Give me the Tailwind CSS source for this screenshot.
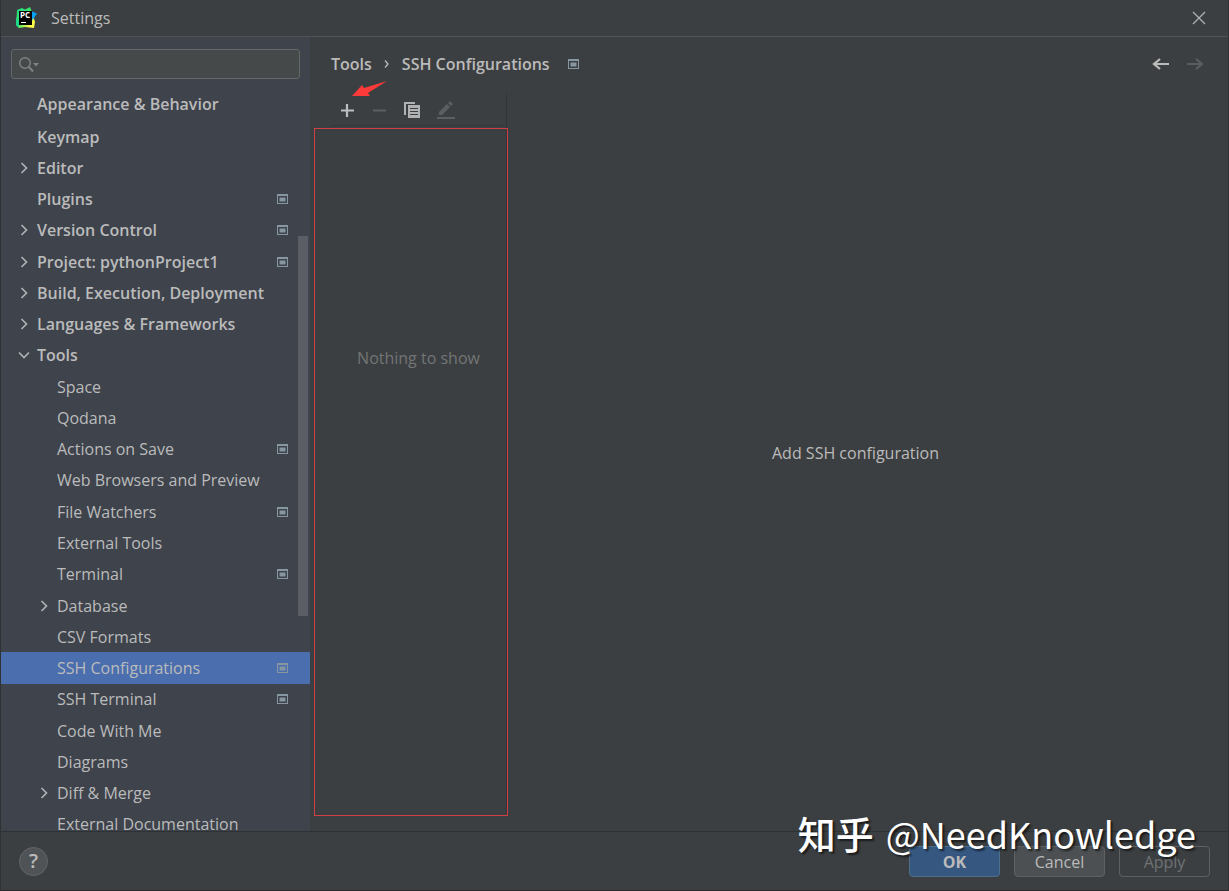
<!DOCTYPE html>
<html lang="en">
<head>
    <meta charset="UTF-8">
    <meta name="viewport" content="width=device-width, initial-scale=1.0">
    <title>Settings</title>
    <script src="https://cdn.jsdelivr.net/npm/@tailwindcss/browser@4"></script>
</head>
<body class="bg-[#3c3f41] font-['Open_Sans','Noto_Sans_CJK_SC',sans-serif] text-base text-[#bbbbbb]">

    <!-- Shared icons -->
    <svg class="hidden">
        <symbol id="chevron" viewBox="0 0 12 12"><path d="M3.5 1L8.5 6L3.5 11" fill="none" stroke="#afb1b3" stroke-width="1.7"/></symbol>
        <symbol id="chevron-down" viewBox="0 0 12 12"><path d="M1 3.5L6 8.5L11 3.5" fill="none" stroke="#afb1b3" stroke-width="1.7"/></symbol>
        <symbol id="project" viewBox="0 0 11 10">
            <path d="M0 0H11V10H0ZM1 2V9H10V2Z" fill="#8797a1" fill-rule="evenodd"/>
            <rect x="2.500" y="3.500" width="6" height="4" fill="#8797a1"/>
        </symbol>
    </svg>

    <div class="relative flex h-screen flex-col overflow-hidden border-x border-[#2f3133]">
        <!-- Title bar -->
        <header class="flex h-[37px] shrink-0 items-center border-b border-[#515456] pr-[22px] pl-[14px]">
            <svg class="h-[22px] w-[22px]" viewBox="0 0 22 22">
                <defs>
                    <linearGradient id="logo" x1="0" y1="0" x2="1" y2="1">
                        <stop offset="0" stop-color="#21d789"/>
                        <stop offset="0.5" stop-color="#3bea62"/>
                        <stop offset="0.8" stop-color="#fcf84a"/>
                    </linearGradient>
                </defs>
                <path d="M2 3L7 1L10 2.500L15 0L17 5L20 15L19 21L10 20L4 21L1 18Z" fill="url(#logo)"/>
                <path d="M16 4L22 6.500L19 11L17 13Z" fill="#07a3f2"/>
                <path d="M1 11L4 13V21L1 18Z" fill="#21d789"/>
                <rect x="4" y="4" width="13" height="14" fill="#000"/>
                <rect x="6" y="15" width="5" height="1" fill="#fff"/>
                <text x="5" y="11" font-size="8" font-weight="700" fill="#fff">PC</text>
            </svg>
            <h1 class="ml-[14px]">Settings</h1>
            <button class="ml-auto" aria-label="Close">
                <svg class="h-[14px] w-[14px]" viewBox="0 0 14 14"><path d="M1 1L13 13M13 1L1 13" stroke="#afb1b3" stroke-width="1.300"/></svg>
            </button>
        </header>

        <main class="flex min-h-0 flex-1">
            <!-- Sidebar -->
            <aside class="relative w-[309px] shrink-0 overflow-hidden bg-[#3e434c] pt-3">
                <div class="relative mx-[10px]">
                    <svg class="absolute top-2 left-2 h-4 w-[22px]" viewBox="0 0 22 16">
                        <circle cx="6" cy="6" r="5.300" fill="none" stroke="#7f8385" stroke-width="1.400"/>
                        <path d="M10 10L14 14.500" stroke="#7f8385" stroke-width="2"/>
                        <path d="M14 6H20L17 9.500Z" fill="#7f8385"/>
                    </svg>
                    <input type="text" aria-label="Search settings" class="block h-[30px] w-full rounded-[3px] border border-[#646869] bg-[#45494a] pr-2 pl-8 outline-none">
                </div>
                <nav class="mt-2" aria-label="Settings categories">
                    <a href="#" class="flex h-[34px] items-center pl-9 font-semibold">Appearance &amp; Behavior</a>
                    <div class="grid h-[719px] auto-rows-fr">
                        <a href="#" class="flex items-center pr-[22px] pl-9 font-semibold">Keymap</a>
                        <a href="#" class="flex items-center pr-[22px] pl-[17px] font-semibold"><svg class="mr-[7px] h-3 w-3"><use href="#chevron"/></svg>Editor</a>
                        <a href="#" class="flex items-center pr-[22px] pl-9 font-semibold">Plugins<svg class="ml-auto h-[10px] w-[11px]"><use href="#project"/></svg></a>
                        <a href="#" class="flex items-center pr-[22px] pl-[17px] font-semibold"><svg class="mr-[7px] h-3 w-3"><use href="#chevron"/></svg>Version Control<svg class="ml-auto h-[10px] w-[11px]"><use href="#project"/></svg></a>
                        <a href="#" class="flex items-center pr-[22px] pl-[17px] font-semibold"><svg class="mr-[7px] h-3 w-3"><use href="#chevron"/></svg>Project: pythonProject1<svg class="ml-auto h-[10px] w-[11px]"><use href="#project"/></svg></a>
                        <a href="#" class="flex items-center pr-[22px] pl-[17px] font-semibold"><svg class="mr-[7px] h-3 w-3"><use href="#chevron"/></svg>Build, Execution, Deployment</a>
                        <a href="#" class="flex items-center pr-[22px] pl-[17px] font-semibold"><svg class="mr-[7px] h-3 w-3"><use href="#chevron"/></svg>Languages &amp; Frameworks</a>
                        <a href="#" class="flex items-center pr-[22px] pl-[17px] font-semibold"><svg class="mr-[7px] h-3 w-3"><use href="#chevron-down"/></svg>Tools</a>
                        <a href="#" class="flex items-center pr-[22px] pl-14">Space</a>
                        <a href="#" class="flex items-center pr-[22px] pl-14">Qodana</a>
                        <a href="#" class="flex items-center pr-[22px] pl-14">Actions on Save<svg class="ml-auto h-[10px] w-[11px]"><use href="#project"/></svg></a>
                        <a href="#" class="flex items-center pr-[22px] pl-14">Web Browsers and Preview</a>
                        <a href="#" class="flex items-center pr-[22px] pl-14">File Watchers<svg class="ml-auto h-[10px] w-[11px]"><use href="#project"/></svg></a>
                        <a href="#" class="flex items-center pr-[22px] pl-14">External Tools</a>
                        <a href="#" class="flex items-center pr-[22px] pl-14">Terminal<svg class="ml-auto h-[10px] w-[11px]"><use href="#project"/></svg></a>
                        <a href="#" class="flex items-center pr-[22px] pl-[37px]"><svg class="mr-[7px] h-3 w-3"><use href="#chevron"/></svg>Database</a>
                        <a href="#" class="flex items-center pr-[22px] pl-14">CSV Formats</a>
                        <a href="#" class="flex items-center bg-[#4b6eaf] pr-[22px] pl-14" aria-current="page">SSH Configurations<svg class="ml-auto h-[10px] w-[11px]"><use href="#project"/></svg></a>
                        <a href="#" class="flex items-center pr-[22px] pl-14">SSH Terminal<svg class="ml-auto h-[10px] w-[11px]"><use href="#project"/></svg></a>
                        <a href="#" class="flex items-center pr-[22px] pl-14">Code With Me</a>
                        <a href="#" class="flex items-center pr-[22px] pl-14">Diagrams</a>
                        <a href="#" class="flex items-center pr-[22px] pl-[37px]"><svg class="mr-[7px] h-3 w-3"><use href="#chevron"/></svg>Diff &amp; Merge</a>
                        <a href="#" class="flex items-center pr-[22px] pl-14">External Documentation</a>
                    </div>
                </nav>
                <!-- Scrollbar thumb -->
                <div class="absolute top-[199px] right-[2px] h-[380px] w-[10px] bg-[#5b5e65]"></div>
            </aside>

            <section class="flex min-w-0 flex-1 flex-col pr-6 pl-[21px]">
                <div class="flex h-[54px] shrink-0 items-center font-semibold">
                    <a href="#">Tools</a>
                    <svg class="mx-3 h-2 w-[6px]" viewBox="0 0 6 8"><path d="M1 0.500L4 4L1 7.500" fill="none" stroke="#bbbbbb" stroke-width="1.300"/></svg>
                    <h2>SSH Configurations</h2>
                    <svg class="ml-[18px] h-[10px] w-[11px]"><use href="#project"/></svg>
                    <button class="ml-auto" aria-label="Back">
                        <svg class="h-[14px] w-[18px]" viewBox="0 0 18 14"><path d="M17 7H2M8 2L2 7L8 12" fill="none" stroke="#bbbbbb" stroke-width="2.200"/></svg>
                    </button>
                    <button class="ml-4" aria-label="Forward" disabled>
                        <svg class="h-[14px] w-[18px]" viewBox="0 0 18 14"><path d="M1 7H16M10 2L16 7L10 12" fill="none" stroke="#5b5e60" stroke-width="2.200"/></svg>
                    </button>
                </div>
                <div class="flex min-h-0 flex-1 pb-4">
                    <!-- Configuration list -->
                    <div class="mt-[3px] flex w-[176px] shrink-0 flex-col border-r border-[#323537]">
                        <div class="flex h-8 shrink-0 items-center gap-4 border-b border-[#353739] pl-2">
                            <button aria-label="Add">
                                <svg class="h-4 w-4" viewBox="0 0 16 16"><path d="M8 2V15M2 8.500H15" stroke="#bbbdbf" stroke-width="2.200"/></svg>
                            </button>
                            <button aria-label="Remove" disabled>
                                <svg class="h-4 w-4" viewBox="0 0 16 16"><path d="M2 8.500H15" stroke="#5c5f61" stroke-width="2"/></svg>
                            </button>
                            <button aria-label="Copy">
                                <svg class="h-[18px] w-[18px]" viewBox="0 0 18 18">
                                    <path d="M1 1H12V3H3V14H1Z" fill="#afb1b3"/>
                                    <path d="M5 4H17V17H5ZM7 7V8H15V7ZM7 10V11H15V10ZM7 13V14H15V13Z" fill="#afb1b3" fill-rule="evenodd"/>
                                </svg>
                            </button>
                            <button aria-label="Edit" disabled>
                                <svg class="h-[18px] w-[18px]" viewBox="0 0 18 18">
                                    <path d="M0 16H18V18H0ZM2 14V11L10 3L13 6L5 14ZM11 2L13 0L16 3L14 5Z" fill="#5c5f61"/>
                                </svg>
                            </button>
                        </div>
                        <p class="mt-[220px] text-center text-[#727576]">Nothing to show</p>
                    </div>
                    <div class="flex flex-1 items-center justify-center">
                        <p>Add SSH configuration</p>
                    </div>
                </div>
            </section>
        </main>

        <!-- Footer -->
        <footer class="flex h-[60px] shrink-0 items-center gap-[14px] border-t border-b border-t-[#2f3234] border-b-[#292b2c] pr-[18px] pl-[18px]">
            <button class="mr-auto flex h-[29px] w-[29px] items-center justify-center rounded-full border border-[#636668] bg-[#4f5355] text-xl font-semibold" aria-label="Help">?</button>
            <button class="h-[31px] w-[91px] rounded-[4px] border border-[#4c708c] bg-[#365880] pt-px font-bold">OK</button>
            <button class="h-[31px] w-[91px] rounded-[4px] border border-[#5e6162] bg-[#4c5052] pt-px">Cancel</button>
            <button class="h-[31px] w-[91px] rounded-[4px] border border-[#5e6162] pt-px text-[#6f7274]" disabled>Apply</button>
        </footer>

        <!-- Annotations -->
        <div class="pointer-events-none absolute top-[128px] bottom-[75px] left-[313px] w-[194px] border border-[#ce4043]"></div>
        <svg class="pointer-events-none absolute top-[81px] left-[351px] h-4 w-9" viewBox="0 0 36 16">
            <path d="M0 15L10 4L12 7L35 0L16 12L18 15Z" fill="#fb3a39"/>
        </svg>
        <p class="pointer-events-none absolute right-8 bottom-[30px] flex items-baseline gap-3 font-['Noto_Sans_CJK_SC',sans-serif] text-[36px] leading-[56px] whitespace-nowrap text-white [text-shadow:2px_2px_2px_rgb(0_0_0/0.6)]"><span class="text-[38px] font-medium">知乎</span> <span>@NeedKnowledge</span></p>
    </div>
</body>
</html>
